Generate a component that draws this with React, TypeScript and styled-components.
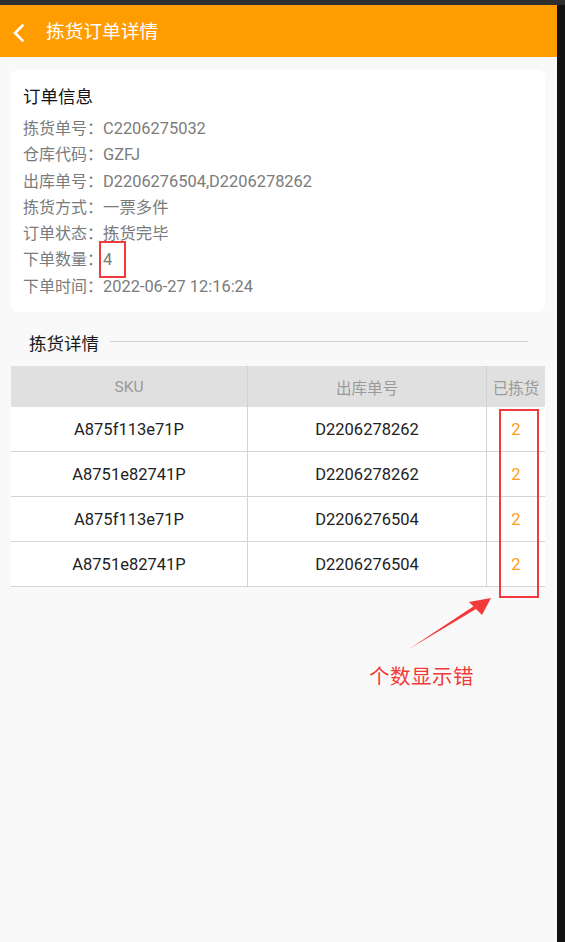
import React from "react";
import styled, { createGlobalStyle } from "styled-components";

const Global = createGlobalStyle`
  html, body { margin: 0; padding: 0; background: #111; }
  body { font-family: Roboto, "Noto Sans CJK SC", sans-serif; }
  * { box-sizing: border-box; }
`;

const Screen = styled.div`
  display: flex;
  width: 565px;
  height: 942px;
  overflow: hidden;
  position: relative;
`;

const Phone = styled.div`
  width: 557px;
  display: flex;
  flex-direction: column;
  background: #f9f9f9;
`;

const Edge = styled.div`
  width: 8px;
  background: #121212;
  border-top: 5px solid #2f2f2f;
`;

const StatusBar = styled.div`
  height: 5px;
  background: #2f2f2f;
`;

const Header = styled.div`
  height: 52px;
  background: #ff9c00;
  display: flex;
  align-items: center;
  padding-left: 10px;
  padding-top: 3px;
  gap: 16px;
  color: #fff;
`;

const Title = styled.div`
  font-size: 18.7px;
  line-height: 24px;
  margin-top: -2px;
`;

const Content = styled.div`
  flex: 1;
  padding: 13px 12px 0 11px;
  display: flex;
  flex-direction: column;
`;

const Card = styled.div`
  background: #fff;
  border-radius: 7px;
  padding: 13px 12px 12px 12px;
`;

const CardTitle = styled.div`
  font-size: 17.5px;
  line-height: 28px;
  color: #111;
  margin-bottom: 5px;
`;

const InfoRow = styled.div`
  font-size: 16px;
  line-height: 26.3px;
  color: #7b7b7b;
  white-space: nowrap;
`;

const Value = styled.span`
  font-size: 16.4px;
`;

const Marked = styled.span`
  display: inline-block;
  position: relative;
  &::after {
    content: "";
    position: absolute;
    left: -4px;
    top: -6px;
    width: 23px;
    height: 33px;
    border: 2px solid #f33a3a;
  }
`;

const SectionRow = styled.div`
  display: flex;
  align-items: center;
  height: 26px;
  margin-top: 18px;
  padding-left: 18px;
  padding-right: 17px;
  gap: 11px;
`;

const SectionTitle = styled.div`
  font-size: 17.5px;
  color: #1a1a1a;
  line-height: 26px;
  margin-top: 2px;
`;

const SectionLine = styled.div`
  flex: 1;
  height: 1px;
  background: #cfcfcf;
  margin-top: -3px;
`;

const Table = styled.div`
  margin-top: 10px;
  display: grid;
  grid-template-columns: 237px 239px 58px;
  background: #fff;
`;

const HeadCell = styled.div<{ $last?: boolean }>`
  height: 41px;
  background: #e0e0e0;
  color: #9a9a9a;
  font-size: 15.5px;
  display: flex;
  align-items: center;
  justify-content: center;
  border-right: ${(p) => (p.$last ? "none" : "1px solid #d2d2d2")};
  white-space: nowrap;
`;

const Cell = styled.div<{ $last?: boolean; $accent?: boolean }>`
  height: 45px;
  color: ${(p) => (p.$accent ? "#ff9d1b" : "#222")};
  font-size: 16.5px;
  display: flex;
  align-items: center;
  justify-content: center;
  border-bottom: 1px solid #d4d4d4;
  border-right: ${(p) => (p.$last ? "none" : "1px solid #d4d4d4")};
`;

const Overlay = styled.div`
  position: absolute;
  inset: 0;
  pointer-events: none;
`;

const ColumnBox = styled.div`
  position: absolute;
  left: 499px;
  top: 409px;
  width: 40px;
  height: 189px;
  border: 2px solid #f33a3a;
`;

const Note = styled.div`
  position: absolute;
  left: 369px;
  top: 662px;
  font-family: "Noto Sans CJK SC", sans-serif;
  font-size: 20.5px;
  line-height: 26px;
  color: #f33a3a;
  letter-spacing: 0.5px;
`;

const ArrowSvg = styled.svg`
  position: absolute;
  left: 0;
  top: 0;
`;

const info: [string, React.ReactNode][] = [
  ["拣货单号：", "C2206275032"],
  ["仓库代码：", "GZFJ"],
  ["出库单号：", "D2206276504,D2206278262"],
  ["拣货方式：", "一票多件"],
  ["订单状态：", "拣货完毕"],
  ["下单数量：", <Marked>4</Marked>],
  ["下单时间：", "2022-06-27 12:16:24"],
];

const rows = [
  ["A875f113e71P", "D2206278262", "2"],
  ["A8751e82741P", "D2206278262", "2"],
  ["A875f113e71P", "D2206276504", "2"],
  ["A8751e82741P", "D2206276504", "2"],
];

export default function App() {
  return (
    <>
      <Global />
      <Screen>
        <Phone>
          <StatusBar />
          <Header>
            <svg width="20" height="20" viewBox="0 0 20 20">
              <path d="M12.5 2.5 L5 10 L12.5 17.5" fill="none" stroke="#fff" strokeWidth="2.6" strokeLinecap="square" />
            </svg>
            <Title>拣货订单详情</Title>
          </Header>
          <Content>
            <Card>
              <CardTitle>订单信息</CardTitle>
              {info.map(([k, v]) => (
                <InfoRow key={k}>
                  {k}
                  <Value>{v}</Value>
                </InfoRow>
              ))}
            </Card>
            <SectionRow>
              <SectionTitle>拣货详情</SectionTitle>
              <SectionLine />
            </SectionRow>
            <Table>
              <HeadCell>SKU</HeadCell>
              <HeadCell>出库单号</HeadCell>
              <HeadCell $last>已拣货</HeadCell>
              {rows.map((r, i) => (
                <React.Fragment key={i}>
                  <Cell>{r[0]}</Cell>
                  <Cell>{r[1]}</Cell>
                  <Cell $last $accent>{r[2]}</Cell>
                </React.Fragment>
              ))}
            </Table>
          </Content>
        </Phone>
        <Edge />
        <Overlay>
          <ColumnBox />
          <ArrowSvg width="565" height="942" viewBox="0 0 565 942">
            <polygon points="409,649 474,606 476,609" fill="#f33a3a" />
            <polygon points="491,598 469,602 482,615" fill="#f33a3a" />
          </ArrowSvg>
          <Note>个数显示错</Note>
        </Overlay>
      </Screen>
    </>
  );
}
